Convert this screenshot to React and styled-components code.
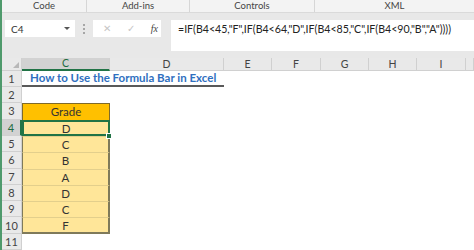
import styled, {createGlobalStyle} from 'styled-components'

const GlobalStyle = createGlobalStyle`
  html, body { margin: 0; padding: 0; background: #fff; }
  body { font-family: Lato, "Open Sans", sans-serif; }
`

const groups = [
  {label: 'Code', width: 84},
  {label: 'Add-ins', width: 102},
  {label: 'Controls', width: 124},
  {label: 'XML', width: 0},
]

const columns = [
  {label: 'C', width: 88, active: true},
  {label: 'D', width: 114},
  {label: 'E', width: 48},
  {label: 'F', width: 49},
  {label: 'G', width: 48},
  {label: 'H', width: 48},
  {label: 'I', width: 49},
  {label: '', width: 0},
]

const grades = ['D', 'C', 'B', 'A', 'D', 'C', 'F']

const formula = '=IF(B4<45,"F",IF(B4<64,"D",IF(B4<85,"C",IF(B4<90,"B","A"))))'

export default function App() {
  const rows = Array.from({length: 11}, (_, i) => i + 1)

  return (
    <Window>
      <GlobalStyle/>
      <Edge/>
      <Main>
        <Ribbon>
          {groups.map(g => (
            <Group key={g.label} $width={g.width}>{g.label}</Group>
          ))}
        </Ribbon>
        <FormulaBar>
          <NameBox>
            <span>C4</span>
            <Caret/>
          </NameBox>
          <Grip>
            <i/><i/><i/>
          </Grip>
          <ActionBox>
            <Action $faint>✕</Action>
            <Action $faint>✓</Action>
            <Fx>fx</Fx>
          </ActionBox>
          <FormulaInput>{formula}</FormulaInput>
        </FormulaBar>
        <Sheet $cols={columns.map(c => c.width ? c.width + 'px' : '1fr').join(' ')}>
          <Corner><Triangle/></Corner>
          {columns.map((c, i) => (
            <ColHead key={i} $active={c.active}>{c.label}</ColHead>
          ))}
          {rows.map(r => (
            <Row key={r} r={r}/>
          ))}
        </Sheet>
      </Main>
    </Window>
  )
}

const Row = ({r}) => {
  const cells = []
  for (let i = 0; i < columns.length; i++) {
    if (r === 1 && i === 0) {
      cells.push(<TitleCell key={i}>How to Use the Formula Bar in Excel</TitleCell>)
      i++
      continue
    }
    if (i === 0 && r === 3) {
      cells.push(<HeadCell key={i}>Grade</HeadCell>)
      continue
    }
    if (i === 0 && r >= 4 && r <= 10) {
      cells.push(
        <GradeCell key={i} $active={r === 4} $last={r === 10}>
          {grades[r - 4]}
          {r === 4 && <Handle/>}
        </GradeCell>
      )
      continue
    }
    cells.push(<Cell key={i}/>)
  }
  return (
    <>
      <RowHead $active={r === 4}>{r}</RowHead>
      {cells}
    </>
  )
}

const Window = styled.div`
  display: flex;
  width: 474px;
  height: 250px;
  overflow: hidden;
  background: #fff;
`

const Edge = styled.div`
  width: 2px;
  flex: none;
  background: #4f9a6c;
`

const Main = styled.div`
  flex: 1;
  display: flex;
  flex-direction: column;
  min-width: 0;
`

const Ribbon = styled.div`
  display: flex;
  height: 12px;
  background: #f3f3f3;
  border-bottom: 1px solid #dadada;
`

const Group = styled.div`
  ${p => p.$width ? `width: ${p.$width}px;` : 'flex: 1;'}
  display: flex;
  align-items: center;
  justify-content: center;
  font-size: 9.5px;
  line-height: 12px;
  color: #444;
  border-right: 1px solid #d6d6d6;
  &:last-child { border-right: none; }
`

const FormulaBar = styled.div`
  display: flex;
  align-items: flex-start;
  height: 46px;
  padding-top: 7px;
  padding-left: 3px;
  box-sizing: border-box;
  background: #e8e8e8;
`

const NameBox = styled.div`
  width: 70px;
  height: 17px;
  display: flex;
  align-items: center;
  justify-content: space-between;
  padding: 0 5px 0 6px;
  box-sizing: border-box;
  background: #fff;
  font-size: 10px;
  color: #333;
`

const Caret = styled.span`
  width: 0;
  height: 0;
  border-left: 3px solid transparent;
  border-right: 3px solid transparent;
  border-top: 3px solid #555;
`

const Grip = styled.div`
  width: 18px;
  height: 17px;
  display: flex;
  flex-direction: column;
  align-items: center;
  justify-content: center;
  gap: 2px;
  i {
    width: 2px;
    height: 2px;
    background: #a6a6a6;
  }
`

const ActionBox = styled.div`
  width: 68px;
  height: 17px;
  display: flex;
  align-items: center;
  justify-content: space-between;
  padding: 0 3px 0 10px;
  box-sizing: border-box;
  background: #fff;
`

const Action = styled.span`
  font-family: "DejaVu Sans", sans-serif;
  font-size: 10px;
  color: ${p => p.$faint ? '#c6c6c6' : '#555'};
`

const Fx = styled.span`
  font-family: "Liberation Serif", serif;
  font-style: italic;
  font-size: 10px;
  color: #444;
`

const FormulaInput = styled.div`
  flex: 1;
  height: 31px;
  margin-left: 10px;
  padding: 3px 7px;
  box-sizing: border-box;
  background: #fff;
  font-size: 10.6px;
  line-height: 12px;
  color: #222;
  white-space: nowrap;
`

const Sheet = styled.div`
  display: grid;
  grid-template-columns: 20px ${p => p.$cols};
  grid-template-rows: 13px repeat(11, 16.3px);
`

const Corner = styled.div`
  position: relative;
  background: #e9e9e9;
  border-right: 1px solid #d0d0d0;
  border-bottom: 1px solid #d0d0d0;
  box-sizing: border-box;
`

const Triangle = styled.span`
  position: absolute;
  right: 2px;
  bottom: 2px;
  width: 0;
  height: 0;
  border-left: 6px solid transparent;
  border-bottom: 6px solid #b8b8b8;
`

const ColHead = styled.div`
  display: flex;
  align-items: center;
  justify-content: center;
  box-sizing: border-box;
  font-size: 10.5px;
  color: ${p => p.$active ? '#1e6b41' : '#444'};
  background: ${p => p.$active ? '#d2d2d2' : '#e9e9e9'};
  border-right: 1px solid #d0d0d0;
  border-bottom: ${p => p.$active ? '2px solid #217346' : '1px solid #d0d0d0'};
`

const RowHead = styled.div`
  display: flex;
  align-items: center;
  justify-content: center;
  box-sizing: border-box;
  font-size: 11px;
  color: ${p => p.$active ? '#1e6b41' : '#444'};
  background: ${p => p.$active ? '#d2d2d2' : '#e9e9e9'};
  border-right: ${p => p.$active ? '2px solid #217346' : '1px solid #d0d0d0'};
  border-bottom: 1px solid #d0d0d0;
`

const Cell = styled.div`
  background: #fff;
`

const TitleCell = styled.div`
  grid-column: span 2;
  display: flex;
  align-items: center;
  padding-left: 8px;
  box-sizing: border-box;
  border-bottom: 2px solid #595959;
  font-size: 11.5px;
  font-weight: 700;
  color: #2f6fc0;
  white-space: nowrap;
`

const HeadCell = styled.div`
  display: flex;
  align-items: center;
  justify-content: center;
  box-sizing: border-box;
  background: #ffc000;
  border: 1px solid #7f6a2a;
  border-bottom: none;
  font-size: 11.5px;
  color: #333;
`

const GradeCell = styled.div`
  position: relative;
  display: flex;
  align-items: center;
  justify-content: center;
  box-sizing: border-box;
  background: #ffe699;
  border-left: 1px solid #7f7a5a;
  border-right: ${p => p.$active ? '1px' : '2px'} solid #7f7a5a;
  border-top: 1px solid ${p => p.$active ? '#217346' : '#e3cf8c'};
  border-bottom: ${p => p.$last ? '2px solid #7f7a5a' : 'none'};
  font-size: 11.5px;
  color: #333;
  ${p => p.$active && `
    outline: 2px solid #217346;
    outline-offset: -2px;
    border-right-color: #217346;
    z-index: 1;
  `}
`

const Handle = styled.span`
  position: absolute;
  right: -3px;
  bottom: -3px;
  width: 4px;
  height: 4px;
  background: #217346;
  border: 1px solid #fff;
`
